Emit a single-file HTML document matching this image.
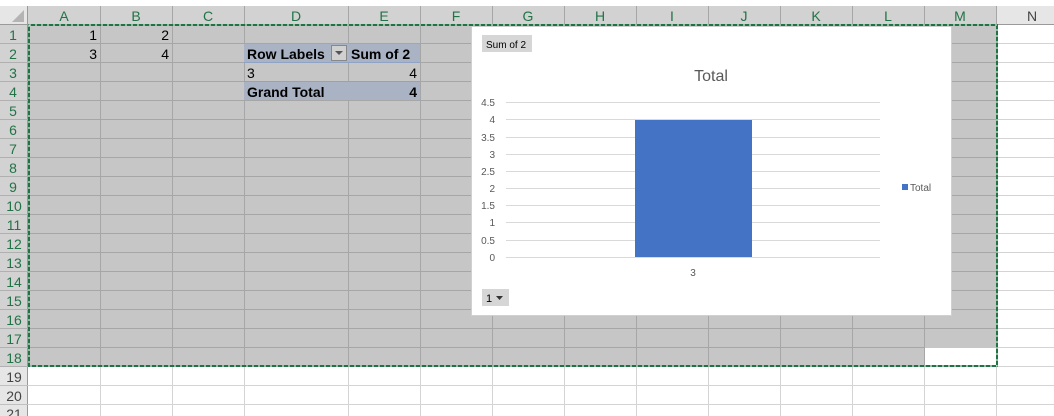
<!DOCTYPE html><html><head><style>body{margin:0;background:#fff}svg{display:block}</style></head><body>
<svg width="1054" height="416" xmlns="http://www.w3.org/2000/svg" font-family="Liberation Sans, Calibri, sans-serif">
<rect width="1054" height="416" fill="#fff"/>
<!-- header bg -->
<rect x="0" y="6" width="1054" height="19" fill="#e6e6e6"/>
<rect x="28" y="6" width="968" height="19" fill="#d2d2d2"/>
<rect x="0" y="25" width="28" height="391" fill="#e6e6e6"/>
<rect x="0" y="25" width="28" height="342" fill="#d2d2d2"/>
<polygon points="24,10 24,22 12,22" fill="#b4b4b4"/>
<line x1="0" y1="24.5" x2="1054" y2="24.5" stroke="#9a9a9a"/>
<line x1="27.5" y1="6" x2="27.5" y2="416" stroke="#9a9a9a"/>
<!-- selected area -->
<rect x="28" y="25" width="968" height="342" fill="#c6c6c6"/>
<rect x="924" y="348" width="72" height="18" fill="#fff"/>
<g stroke="#a6a6a6" stroke-width="1">
<path d="M100.5 6V366M172.5 6V366M244.5 6V366M348.5 6V366M420.5 6V366M492.5 6V366M564.5 6V366M636.5 6V366M708.5 6V366M780.5 6V366M852.5 6V366M924.5 6V366M996.5 6V25"/>
<path d="M28 43.5H996M28 62.5H996M28 81.5H996M28 100.5H996M28 119.5H996M28 138.5H996M28 157.5H996M28 176.5H996M28 195.5H996M28 214.5H996M28 233.5H996M28 252.5H996M28 271.5H996M28 290.5H996M28 309.5H996M28 328.5H996M28 347.5H924"/>
</g>
<g stroke="#d4d4d4">
<path d="M100.5 367V416M172.5 367V416M244.5 367V416M348.5 367V416M420.5 367V416M492.5 367V416M564.5 367V416M636.5 367V416M708.5 367V416M780.5 367V416M852.5 367V416M924.5 367V416M996.5 367V416"/>
<path d="M28 385.5H1054M28 404.5H1054M998 43.5H1054M998 62.5H1054M998 81.5H1054M998 100.5H1054M998 119.5H1054M998 138.5H1054M998 157.5H1054M998 176.5H1054M998 195.5H1054M998 214.5H1054M998 233.5H1054M998 252.5H1054M998 271.5H1054M998 290.5H1054M998 309.5H1054M998 328.5H1054M998 347.5H1054M998 366.5H1054"/>
</g>
<g stroke="#c0c0c0"><path d="M0 385.5H28M0 404.5H28"/></g>
<g stroke="#b0b0b0"><path d="M0 43.5H28M0 62.5H28M0 81.5H28M0 100.5H28M0 119.5H28M0 138.5H28M0 157.5H28M0 176.5H28M0 195.5H28M0 214.5H28M0 233.5H28M0 252.5H28M0 271.5H28M0 290.5H28M0 309.5H28M0 328.5H28M0 347.5H28M0 366.5H28"/></g>
<!-- column headers -->
<g font-size="14" fill="#217346" text-anchor="middle">
<text x="64" y="21">A</text><text x="136" y="21">B</text><text x="208" y="21">C</text><text x="296" y="21">D</text><text x="384" y="21">E</text><text x="456" y="21">F</text><text x="528" y="21">G</text><text x="600" y="21">H</text><text x="672" y="21">I</text><text x="744" y="21">J</text><text x="816" y="21">K</text><text x="888" y="21">L</text><text x="960" y="21">M</text>
</g>
<text x="1032" y="21" font-size="14" fill="#444" text-anchor="middle">N</text>
<g font-size="14" fill="#217346" text-anchor="middle">
<text x="13" y="40">1</text><text x="13" y="59">2</text><text x="13" y="78">3</text><text x="13" y="97">4</text><text x="13" y="116">5</text><text x="13" y="135">6</text><text x="13" y="154">7</text><text x="13" y="173">8</text><text x="13" y="192">9</text><text x="14" y="211">10</text><text x="14" y="230">11</text><text x="14" y="249">12</text><text x="14" y="268">13</text><text x="14" y="287">14</text><text x="14" y="306">15</text><text x="14" y="325">16</text><text x="14" y="344">17</text><text x="14" y="363">18</text>
</g>
<g font-size="14" fill="#444" text-anchor="middle"><text x="14" y="382">19</text><text x="14" y="401">20</text><text x="14" y="419">21</text></g>
<!-- cell values -->
<g font-size="14" fill="#000" text-anchor="end">
<text x="97" y="40">1</text><text x="169" y="40">2</text><text x="97" y="59">3</text><text x="169" y="59">4</text>
</g>
<!-- pivot -->
<rect x="244" y="44" width="176" height="18" fill="#aab3c4"/>
<rect x="244" y="82" width="176" height="18" fill="#aab3c4"/>
<path d="M244 62.5H420M244 81.5H420" stroke="#8fa3c6"/>
<rect x="331.5" y="45.5" width="15" height="15" fill="#d0d0d0" stroke="#888"/>
<polygon points="335,51 343,51 339,55" fill="#555"/>
<g font-size="14" fill="#000">
<text x="247" y="59" font-weight="bold">Row Labels</text>
<text x="351" y="59" font-weight="bold">Sum of 2</text>
<text x="247" y="78">3</text>
<text x="417" y="78" text-anchor="end">4</text>
<text x="247" y="97" font-weight="bold">Grand Total</text>
<text x="417" y="97" text-anchor="end" font-weight="bold">4</text>
</g>
<!-- chart -->
<rect x="471.5" y="26.5" width="480" height="289" fill="#fff" stroke="#d0d0d0"/>
<rect x="482" y="35" width="50" height="17" fill="#d6d6d6"/>
<text x="486" y="48" font-size="10" fill="#000">Sum of 2</text>
<text x="711" y="81" font-size="16" fill="#595959" text-anchor="middle">Total</text>
<g stroke="#d9d9d9"><path d="M506 102.5H880M506 119.5H880M506 137.5H880M506 154.5H880M506 171.5H880M506 188.5H880M506 205.5H880M506 222.5H880M506 240.5H880M506 257.5H880"/></g>
<rect x="635" y="120" width="117" height="137" fill="#4472c4"/>
<g font-size="10" fill="#595959" text-anchor="end">
<text x="495" y="106">4.5</text><text x="495" y="123">4</text><text x="495" y="141">3.5</text><text x="495" y="158">3</text><text x="495" y="175">2.5</text><text x="495" y="192">2</text><text x="495" y="209">1.5</text><text x="495" y="226">1</text><text x="495" y="244">0.5</text><text x="495" y="261">0</text>
</g>
<text x="693" y="276" font-size="10" fill="#595959" text-anchor="middle">3</text>
<rect x="902" y="184" width="6" height="6" fill="#4472c4"/>
<text x="910" y="191" font-size="10" fill="#595959">Total</text>
<rect x="482" y="289" width="27" height="17" fill="#d6d6d6"/>
<text x="486" y="302" font-size="11" fill="#000">1</text>
<polygon points="496,296 503,296 499.5,300" fill="#333"/>
<!-- selection marquee -->
<rect x="29" y="25" width="968" height="341" fill="none" stroke="#217346" stroke-width="2"/>
<rect x="29" y="25" width="968" height="341" fill="none" stroke="#fff" stroke-width="1" stroke-dasharray="2,4"/>
</svg>
</body></html>
